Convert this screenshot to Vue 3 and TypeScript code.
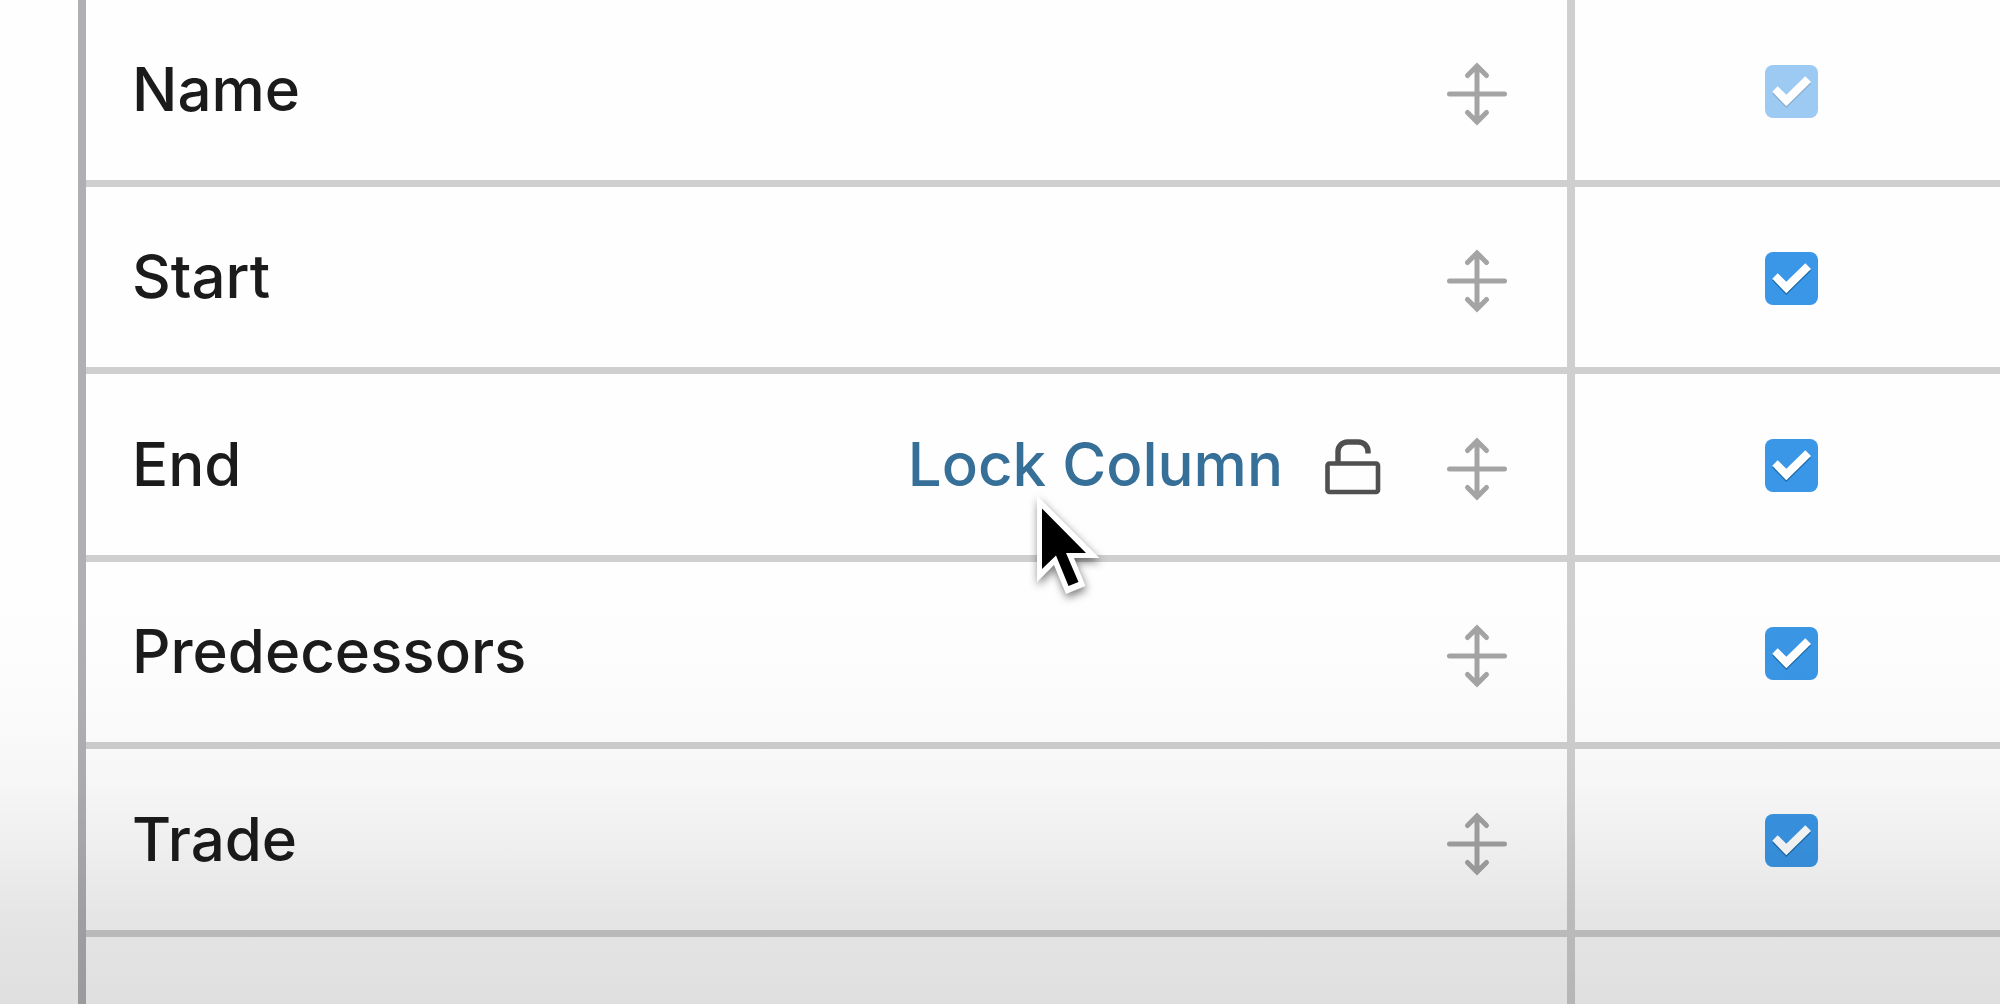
<script setup lang="ts">
import { ref } from 'vue'

interface Column {
  id: string
  label: string
  visible: boolean
  required?: boolean
  hovered?: boolean
}

const columns = ref<Column[]>([
  { id: 'name', label: 'Name', visible: true, required: true },
  { id: 'start', label: 'Start', visible: true },
  { id: 'end', label: 'End', visible: true, hovered: true },
  { id: 'predecessors', label: 'Predecessors', visible: true },
  { id: 'trade', label: 'Trade', visible: true },
])
</script>

<template>
  <main class="page">
    <table class="columns">
      <tbody>
        <tr v-for="column in columns" :key="column.id" class="row">
          <td class="name-cell">
            <div class="name-content">
              <label class="label" :for="column.id">{{ column.label }}</label>
              <button v-if="column.hovered" type="button" class="lock">
                <span class="lock-text">Lock Column</span>
                <svg class="lock-icon" viewBox="0 0 56 56" aria-hidden="true">
                  <rect x="2.5" y="24.5" width="50.5" height="28.5" rx="2" stroke-width="4.6" />
                  <path d="M13 24V12.5A9.5 9.5 0 0 1 22.500 3H33.500A9.500 9.500 0 0 1 43 12.500V14.500" stroke-width="5.4" />
                </svg>
                <svg class="cursor" viewBox="0 0 80 120" aria-hidden="true">
                  <path class="cursor-edge" d="M7 4.500V91L24 74L36 103L55.500 95L44 67H69.500Z" />
                  <path d="M12 17.500V78L26 64.500L38.500 95L48.500 91L36 62H56Z" />
                </svg>
              </button>
              <button type="button" class="drag" :aria-label="`Move ${column.label}`">
                <svg class="drag-icon" viewBox="0 0 60 64" aria-hidden="true">
                  <path d="M2.500 32H57.500M30 5V59M20.500 13.500L30 4L39.500 13.500M20.500 50.500L30 60L39.500 50.500" />
                </svg>
              </button>
            </div>
          </td>
          <td class="check-cell">
            <div class="check">
              <input :id="column.id" v-model="column.visible" type="checkbox" :disabled="column.required" />
              <svg v-if="column.visible" class="tick" viewBox="0 0 53 53" aria-hidden="true">
                <path class="tick-shadow" d="M7.300 28.500L12.700 23L21.300 31.500L40.300 13L46 18.700L21.300 43Z" />
                <path class="tick-mark" d="M7.300 26.700L12.700 21.300L21.300 29.700L40.300 11.300L46 17L21.300 41.300Z" />
              </svg>
            </div>
          </td>
        </tr>
        <tr class="row">
          <td class="name-cell"></td>
          <td class="check-cell"></td>
        </tr>
      </tbody>
    </table>
    <div class="fade"></div>
  </main>
</template>

<style>
body {
  margin: 0;
  background: #fefefe;
}
</style>

<style scoped>
.page {
  position: relative;
  height: 100vh;
  overflow: hidden;
  box-sizing: border-box;
  padding-left: 78px;
  background: #fefefe;
  color: #1b1b1c;
  font-family: Inter, "Liberation Sans", sans-serif;
  font-size: 60px;
  font-weight: 500;
  line-height: 72px;
}

.columns {
  width: 100%;
  border-collapse: separate;
  border-spacing: 0;
  border-left: 8px solid #afb0b4;
}

.row {
  height: 187px;
}

.row:nth-child(2n + 3) {
  height: 188px;
}

.name-cell,
.check-cell {
  box-sizing: border-box;
  padding: 0;
  border-bottom: 7px solid #cfcfcf;
  vertical-align: middle;
}

.name-cell {
  border-right: 8px solid #cfcfcf;
}

.check-cell {
  width: 425px;
  padding-left: 8px;
}

.name-content {
  display: flex;
  align-items: center;
  padding: 0 60px 0 46px;
}

.label,
.lock-text {
  margin-bottom: 2px;
}

.label {
  margin-right: auto;
}

.lock,
.drag {
  padding: 0;
  border: 0;
  background: none;
  font: inherit;
}

.lock {
  position: relative;
  display: flex;
  align-items: center;
  gap: 42px;
  margin-right: 66px;
  color: #366f97;
}

.lock-icon {
  width: 56px;
  height: 56px;
  margin-top: 4px;
  fill: none;
  stroke: #505050;
}

.cursor {
  position: absolute;
  right: 271px;
  top: 63px;
  width: 80px;
  height: 120px;
  filter: drop-shadow(1px 4px 4px rgb(0 0 0 / 50%));
}

.cursor-edge {
  fill: #fff;
}

.drag {
  display: flex;
  margin-top: 8px;
}

.drag-icon {
  width: 60px;
  height: 64px;
  fill: none;
  stroke: #a4a4a4;
  stroke-width: 5;
  stroke-linecap: round;
}

.check {
  position: relative;
  width: 53px;
  height: 53px;
  margin: 0 auto;
  padding-top: 2px;
}

.check input {
  display: block;
  appearance: none;
  width: 53px;
  height: 53px;
  margin: 0;
  border: 2px solid #a4a4a4;
  border-radius: 8px;
}

.check input:checked {
  border: 0;
  background: #3a96e6;
}

.check input:disabled {
  background: #9dcaf2;
}

.tick {
  position: absolute;
  right: 0;
  bottom: 0;
  width: 53px;
  height: 53px;
  pointer-events: none;
}

.tick-mark {
  fill: #fff;
}

.tick-shadow {
  fill: #1c6cab;
}

.check input:disabled + .tick .tick-shadow {
  fill: #86aecf;
}

.fade {
  position: absolute;
  right: 0;
  bottom: 0;
  left: 0;
  height: 404px;
  background: linear-gradient(
    rgb(0 0 0 / 0%),
    rgb(0 0 0 / 1%) 25%,
    rgb(0 0 0 / 3%) 45%,
    rgb(0 0 0 / 6%) 60%,
    rgb(0 0 0 / 10%) 80%,
    rgb(0 0 0 / 12%)
  );
  pointer-events: none;
}
</style>
